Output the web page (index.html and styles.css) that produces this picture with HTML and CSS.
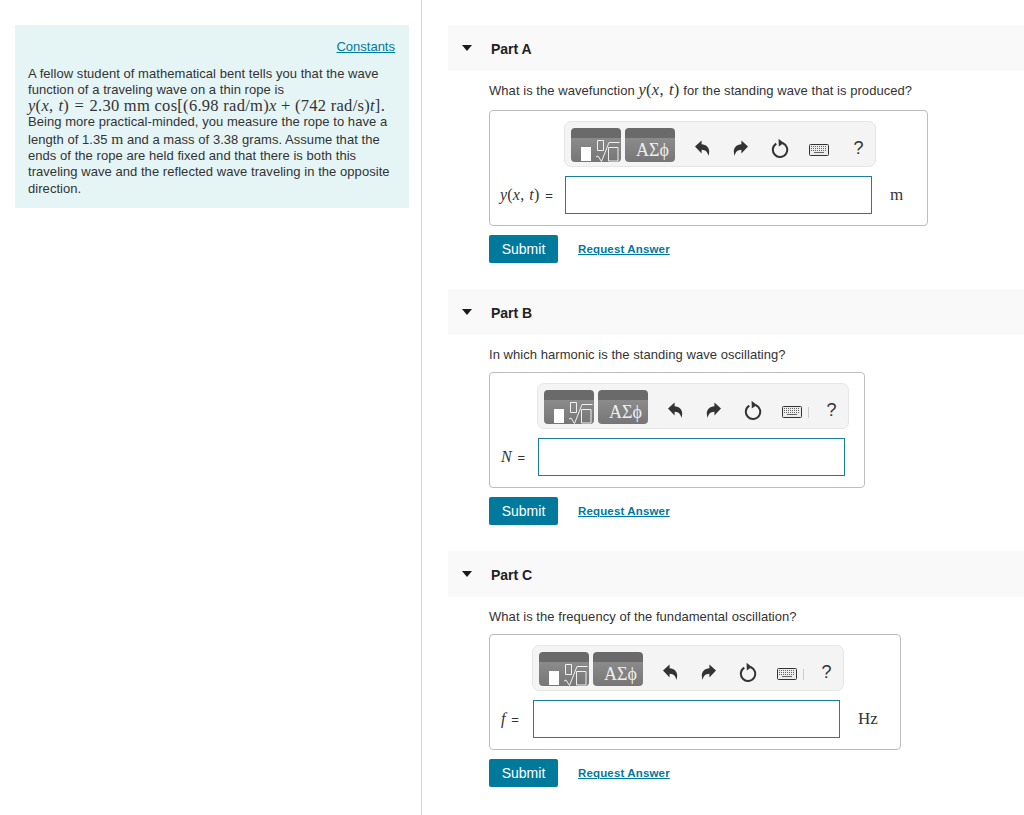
FILE: index.html
```html
<!DOCTYPE html>
<html lang="en">
<head>
<meta charset="utf-8">
<title>Standing wave problem</title>
<link rel="stylesheet" href="styles.css">
</head>
<body>
<svg class="sprite" width="0" height="0" aria-hidden="true">
  <symbol id="i-undo" viewBox="0 0 16 18"><path d="M1 7.500 7.600 1.600v3.700c4.600.2 7.600 3.200 7.600 7.200 0 1.700-.4 3.200-1 4.400-.2-3.400-2.400-6-6.600-6.100v3.600z"/></symbol>
  <symbol id="i-redo" viewBox="0 0 16 18"><path d="M15 7.500 8.400 1.600v3.700c-4.600.2-7.600 3.200-7.600 7.200 0 1.700.4 3.200 1 4.400.2-3.400 2.400-6 6.600-6.100v3.600z"/></symbol>
  <symbol id="i-reload" viewBox="0 0 18 22"><path class="stroke" d="M5.300 6.600A7.200 7.200 0 1 0 11.500 6"/><path d="M7.600 1.800 12.800 6 7.800 9.400z"/></symbol>
  <symbol id="i-keys" viewBox="0 0 20 12"><rect class="kb" x=".5" y=".5" width="19" height="11" rx="1"/><path class="kd" d="M2 2.500h16M2 4.500h16M2 6.500h16"/><path class="ks" d="M5 8.500h10"/></symbol>
  <symbol id="i-template" viewBox="0 0 50 24"><rect class="w" x="10" y="9" width="10" height="14"/><path class="l" d="M26.500 2.500h6v10h-6zM25 19l2-1 3.500 5.500L38 4.500h10.500M37.500 9.500h9.500v13.500h-9.500z"/></symbol>
</svg>
<div class="page">
  <aside class="left">
    <div class="intro">
      <div class="constants"><a href="#">Constants</a></div>
      <p class="statement">A fellow student of mathematical bent tells you that the wave function of a traveling wave on a thin rope is <span class="math-line"><i>y</i>(<i>x</i>,<i class="thin">t</i>) <span class="rel">=</span> 2.30 mm cos[(6.98 rad/m)<i>x</i> + (742 rad/s)<i>t</i>].</span> Being more practical-minded, you measure the rope to have a length of 1.35 <span class="math">m</span> and a mass of 3.38 grams. Assume that the ends of the rope are held fixed and that there is both this traveling wave and the reflected wave traveling in the opposite direction.</p>
    </div>
  </aside>
  <main class="right">
    <section class="part">
      <h2 class="part-head"><span class="caret"></span>Part A</h2>
      <p class="question question-tall">What is the wavefunction <span class="math q-math"><i>y</i>(<i>x</i>,<i class="thin">t</i>)</span> for the standing wave that is produced?</p>
      <div class="answer answer-a">
        <div class="toolbar">
          <span class="tpl"><svg class="tpl-icon"><use href="#i-template"/></svg></span>
          <span class="tpl tpl-greek">ΑΣϕ</span>
          <span class="tool"><svg class="ic-arrow"><use href="#i-undo"/></svg></span>
          <span class="tool"><svg class="ic-arrow"><use href="#i-redo"/></svg></span>
          <span class="tool"><svg class="ic-reload"><use href="#i-reload"/></svg></span>
          <span class="tool"><svg class="ic-keys"><use href="#i-keys"/></svg></span>
          <span class="tool help">?</span>
        </div>
        <label class="lbl"><span class="math"><i>y</i>(<i>x</i>,<i class="thin">t</i>)</span> =</label>
        <div class="field"></div>
        <span class="unit">m</span>
      </div>
      <div class="actions"><button class="submit">Submit</button><a class="request" href="#">Request Answer</a></div>
    </section>
    <section class="part">
      <h2 class="part-head"><span class="caret"></span>Part B</h2>
      <p class="question">In which harmonic is the standing wave oscillating?</p>
      <div class="answer answer-b">
        <div class="toolbar">
          <span class="tpl"><svg class="tpl-icon"><use href="#i-template"/></svg></span>
          <span class="tpl tpl-greek">ΑΣϕ</span>
          <span class="tool"><svg class="ic-arrow"><use href="#i-undo"/></svg></span>
          <span class="tool"><svg class="ic-arrow"><use href="#i-redo"/></svg></span>
          <span class="tool"><svg class="ic-reload"><use href="#i-reload"/></svg></span>
          <span class="tool tool-div"><svg class="ic-keys"><use href="#i-keys"/></svg></span>
          <span class="tool help">?</span>
        </div>
        <label class="lbl lbl-short"><span class="math"><i>N</i></span> =</label>
        <div class="field"></div>
      </div>
      <div class="actions"><button class="submit">Submit</button><a class="request" href="#">Request Answer</a></div>
    </section>
    <section class="part">
      <h2 class="part-head"><span class="caret"></span>Part C</h2>
      <p class="question">What is the frequency of the fundamental oscillation?</p>
      <div class="answer answer-c">
        <div class="toolbar">
          <span class="tpl"><svg class="tpl-icon"><use href="#i-template"/></svg></span>
          <span class="tpl tpl-greek">ΑΣϕ</span>
          <span class="tool"><svg class="ic-arrow"><use href="#i-undo"/></svg></span>
          <span class="tool"><svg class="ic-arrow"><use href="#i-redo"/></svg></span>
          <span class="tool"><svg class="ic-reload"><use href="#i-reload"/></svg></span>
          <span class="tool tool-div"><svg class="ic-keys"><use href="#i-keys"/></svg></span>
          <span class="tool help">?</span>
        </div>
        <label class="lbl lbl-short"><span class="math"><i>f</i></span> =</label>
        <div class="field"></div>
        <span class="unit">Hz</span>
      </div>
      <div class="actions"><button class="submit">Submit</button><a class="request" href="#">Request Answer</a></div>
    </section>
  </main>
</div>
</body>
</html>
```
FILE: styles.css
```css
* { box-sizing: border-box; }
html, body { margin: 0; padding: 0; background: #fff; }
body { font-family: "Liberation Sans", Arial, sans-serif; font-size: 13px; letter-spacing: .05px; color: #333; }
.sprite { position: absolute; }
.page { display: flex; height: 815px; overflow: hidden; }

.left { width: 422px; flex: none; padding: 25px 12px 0 15px; border-right: 1px solid #ccd3de; }
.intro { background: #e5f5f6; padding: 14px 14px 13px 13px; height: 183px; }
.constants { text-align: right; line-height: 16px; margin-bottom: 10.6px; letter-spacing: 0; }
.constants a { color: #007a9c; }
.statement { margin: 0; line-height: 16.3px; }
.math-line { display: block; font-family: "Liberation Serif", serif; font-size: 16.5px; letter-spacing: .28px; line-height: 16.3px; white-space: nowrap; }
.rel { margin: 0 1px; }
.math { font-family: "Liberation Serif", serif; font-size: 15.5px; line-height: 1; }
.q-math { font-size: 16.5px; letter-spacing: .3px; }
.thin { margin-left: 5px; }

.right { flex: 1; min-width: 0; padding: 25px 0 0 26px; }
.part { margin-bottom: 26px; }
.part-head { display: flex; align-items: center; height: 46px; margin: 0; padding: 2px 0 0 14px; background: #f9f9f9; font-size: 14px; font-weight: bold; letter-spacing: 0; color: #222; }
.caret { width: 0; height: 0; margin: -2px 19px 0 0; border-left: 5px solid transparent; border-right: 5px solid transparent; border-top: 6px solid #1a1a1a; }
.question { margin: 12px 0 9px 41px; line-height: 16px; }
.question-tall { height: 18px; margin-top: 11px; margin-bottom: 10px; }

.answer { display: grid; margin-left: 41px; padding: 10px 10px 11px; border: 1px solid #bdbdbd; border-radius: 4px; column-gap: 12px; row-gap: 9px; align-items: center; grid-template-rows: 46px 38px; }
.answer-a { width: 439px; grid-template-columns: 53px 307px auto; }
.answer-b { width: 376px; grid-template-columns: 26px 307px; }
.answer-c { width: 412px; grid-template-columns: 21px 307px auto; }

.toolbar { grid-column: 2; grid-row: 1; width: 312px; height: 46px; margin-left: -1px; padding: 0 0 0 6px; display: flex; align-items: center; background: #f4f4f4; border: 1px solid #e6e6e6; border-radius: 7px; }
.tpl { width: 50px; height: 34px; margin: 2px 4px 0 0; flex: none; border-radius: 4px; background: linear-gradient(#6a6a6a 0, #6a6a6a 10px, #8b8b8b 10px, #767676 100%); }
.tpl-icon { display: block; width: 50px; height: 24px; margin-top: 10px; }
.tpl-greek { padding: 10px 0 0 11px; font-family: "Liberation Serif", serif; font-size: 18px; line-height: 24px; letter-spacing: 0; color: #eee; white-space: nowrap; }
.w { fill: #fff; }
.l { fill: none; stroke: #f0f0f0; stroke-width: 1; }
.tool { position: relative; width: 39.25px; flex: none; margin-top: 8px; display: flex; align-items: center; justify-content: center; color: #333; }
.tool:nth-of-type(3) { margin-left: 3px; }
.ic-arrow { width: 16px; height: 18px; fill: #333; }
.ic-reload { width: 18px; height: 22px; fill: #333; }
.stroke { fill: none; stroke: #333; stroke-width: 2; }
.ic-keys { width: 20px; height: 12px; margin-top: 4px; }
.kb { fill: #ececec; stroke: #333; }
.kd { fill: none; stroke: #666; stroke-dasharray: 1 1; }
.ks { fill: none; stroke: #666; }
.tool-div::after { content: ""; position: absolute; right: 3px; top: 5px; width: 1px; height: 11px; background: #ccc; }
.help { font-size: 18px; line-height: 22px; letter-spacing: 0; }

.lbl { grid-column: 1; grid-row: 2; white-space: nowrap; }
.lbl .math { font-size: 16px; letter-spacing: .2px; margin-right: 2px; }
.lbl-short { padding-left: 1px; }
.field { grid-column: 2; grid-row: 2; height: 38px; border: 1px solid #1a7f9f; background: #fff; }
.unit { grid-column: 3; grid-row: 2; padding-left: 6px; font-family: "Liberation Serif", serif; font-size: 17px; letter-spacing: 0; }

.actions { display: flex; align-items: center; margin: 9px 0 0 41px; }
.submit { width: 69px; height: 28px; padding: 0; border: 0; border-radius: 2px; background: #007a9c; color: #fff; font: 14px "Liberation Sans", Arial, sans-serif; }
.request { margin-left: 20px; margin-top: -1px; color: #007a9c; font-size: 11.5px; font-weight: bold; letter-spacing: .15px; }
```
